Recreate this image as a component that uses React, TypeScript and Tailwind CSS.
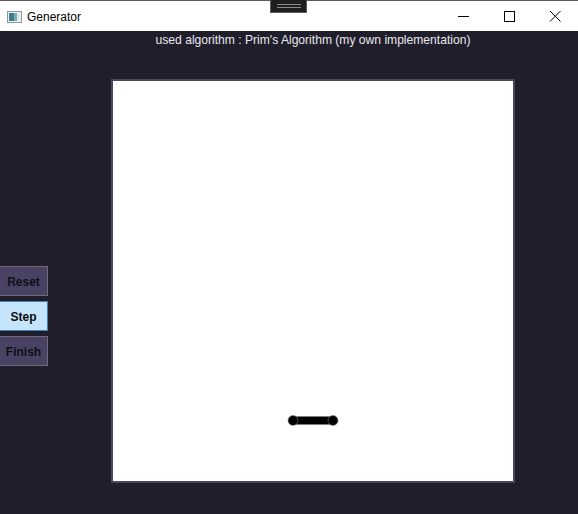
import React from "react";

export default function App() {
  return (
    <div className="relative w-[578px] h-[514px] overflow-hidden bg-[#201e2b] flex flex-col" style={{ fontFamily: '"Liberation Sans", Arial, sans-serif' }}>
      {/* title bar */}
      <div className="h-[31px] bg-white border-t border-[#5a5a5a] flex items-center shrink-0">
        <div className="ml-[7px] w-[15px] h-[12px] mt-[1px]">
          <svg width="15" height="12" viewBox="0 0 15 12">
            <rect x="0.5" y="0.5" width="14" height="11" fill="#eef2f4" stroke="#8a9aa4" />
            <rect x="2" y="2" width="5" height="8" fill="#3f7b8c" />
            <rect x="7" y="2" width="3" height="8" fill="#79b3a8" />
            <rect x="10" y="2" width="3" height="8" fill="#dfe7ea" />
          </svg>
        </div>
        <span className="ml-[5px] text-[12px] text-black mt-[1px]">Generator</span>
        <div className="ml-auto flex items-center h-full">
          <div className="w-[46px] h-full flex items-center justify-center">
            <svg width="12" height="12" viewBox="0 0 12 12"><line x1="1" y1="6.5" x2="12" y2="6.5" stroke="#000" strokeWidth="1" /></svg>
          </div>
          <div className="w-[46px] h-full flex items-center justify-center">
            <svg width="12" height="12" viewBox="0 0 12 12"><rect x="1.5" y="1.5" width="10" height="10" fill="none" stroke="#000" strokeWidth="1" /></svg>
          </div>
          <div className="w-[46px] h-full flex items-center justify-center">
            <svg width="12" height="12" viewBox="0 0 12 12"><path d="M1 1 L11.5 11.5 M11.5 1 L1 11.5" stroke="#000" strokeWidth="1" /></svg>
          </div>
        </div>
      </div>

      {/* drag handle overlay */}
      <div className="absolute left-[270px] top-0 w-[37px] h-[13px] bg-[#1f1f1f] border border-[#5c5c5c] border-t-0 flex flex-col items-center justify-center gap-[2px]">
        <div className="w-[24px] h-px bg-[#8a8a8a]" />
        <div className="w-[24px] h-px bg-[#8a8a8a]" />
      </div>

      {/* content */}
      <div className="flex flex-1">
        <div className="w-[111px] pt-[235px] flex flex-col gap-[5px]">
          <button className="-ml-px w-[49px] h-[30px] pt-px bg-[#4a4263] border border-[#6f6c78] text-[12px] font-bold text-[#100e18] flex items-center justify-center">Reset</button>
          <button className="-ml-px w-[49px] h-[30px] pt-px bg-[#c4e5fc] border border-[#3b83c0] text-[12px] font-bold text-[#0b0b0b] flex items-center justify-center">Step</button>
          <button className="-ml-px w-[49px] h-[30px] pt-px bg-[#4a4263] border border-[#6f6c78] text-[12px] font-bold text-[#100e18] flex items-center justify-center">Finish</button>
        </div>
        <div className="w-[404px] flex flex-col">
          <div className="h-[18px] text-center text-[12.1px] text-[#e8e8ec] leading-[18px]">
            used algorithm : Prim's Algorithm (my own implementation)
          </div>
          <div className="mt-[30px] w-[404px] h-[404px] border-2 border-[#4a4560] bg-white">
            <svg width="400" height="400" viewBox="0 0 400 400">
              <line x1="180" y1="339.5" x2="220" y2="339.5" stroke="#000" strokeWidth="8" />
              <circle cx="180" cy="339.5" r="5" fill="#000" stroke="#888" strokeWidth="0.6" />
              <circle cx="220" cy="339.5" r="5" fill="#000" stroke="#888" strokeWidth="0.6" />
            </svg>
          </div>
        </div>
      </div>
    </div>
  );
}
